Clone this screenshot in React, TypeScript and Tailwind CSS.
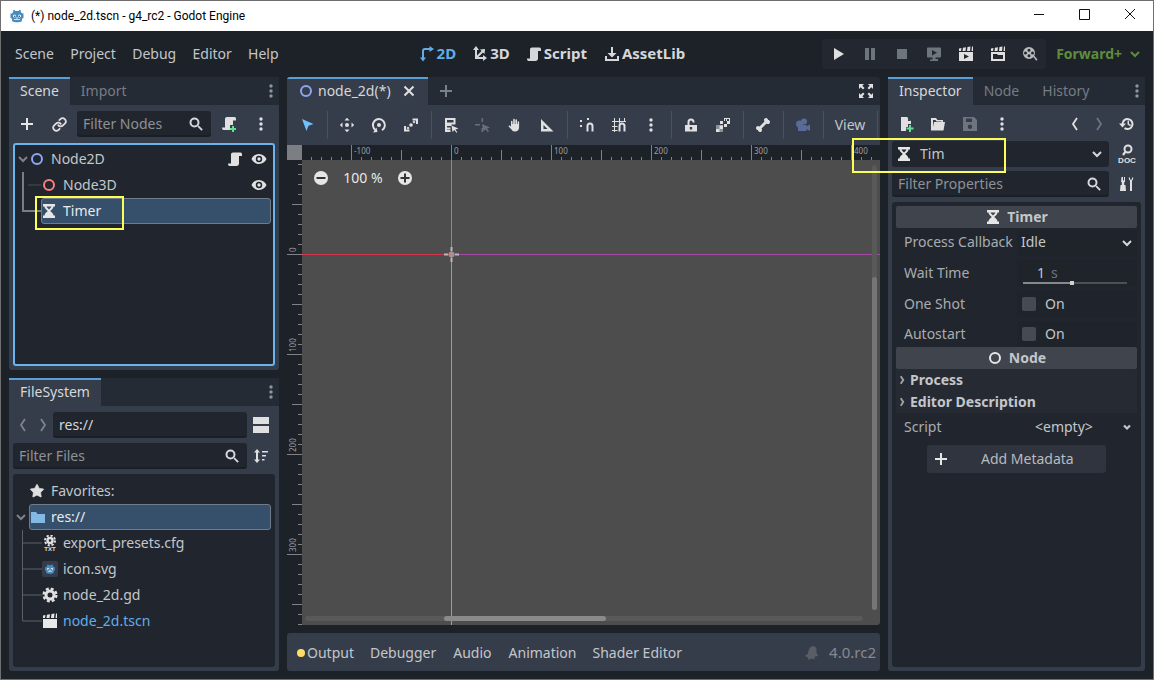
import type { ReactNode } from "react"
import { Link, Star } from "lucide-react"

const ACCENT = "border-t-2 border-[#5a9fd6] pb-[2px]"

function Ico({ children, className = "" }: { children: ReactNode; className?: string }) {
  return (
    <svg viewBox="0 0 16 16" className={`size-4 shrink-0 ${className}`} fill="currentColor">
      {children}
    </svg>
  )
}

const Line = ({ d, w = 2 }: { d: string; w?: number }) => (
  <path d={d} fill="none" stroke="currentColor" strokeWidth={w} />
)

const Plus = ({ className = "" }) => <Ico className={className}><path d="M7 2h2v5h5v2H9v5H7V9H2V7h5z" /></Ico>
const Dots = ({ className = "" }) => (
  <Ico className={className}><circle cx="8" cy="3" r="1.7" /><circle cx="8" cy="8" r="1.7" /><circle cx="8" cy="13" r="1.7" /></Ico>
)
const Search = ({ className = "" }) => (
  <Ico className={className}><circle cx="6.5" cy="6.5" r="4" fill="none" stroke="currentColor" strokeWidth="2" /><path d="M9.5 10.8l1.3-1.3 4 4-1.3 1.3z" /></Ico>
)
const Chevron = ({ className = "", w = 2 }: { className?: string; w?: number }) => <Ico className={className}><Line d="M4 6l4 4 4-4" w={w} /></Ico>
const Back = ({ className = "" }) => <Ico className={className}><Line d="M10 2L6 8l4 6" w={1.8} /></Ico>
const Fwd = ({ className = "", w = 1.8 }: { className?: string; w?: number }) => <Ico className={className}><Line d="M6 2l4 6-4 6" w={w} /></Ico>
const Hourglass = ({ className = "" }) => (
  <Ico className={className}>
    <path fillRule="evenodd" d="M2 1h12v2.500h-1.500c0 1.800-1.900 3.200-3.300 4.500 1.400 1.300 3.300 2.700 3.300 4.500H14V15H2v-2.500h1.500c0-1.800 1.900-3.200 3.300-4.500-1.400-1.300-3.300-2.700-3.300-4.500H2zM5.500 3.500c.3 1 1.500 2 2.500 3 1-1 2.200-2 2.500-3z" />
  </Ico>
)
const Ring = ({ className = "" }) => (
  <Ico className={className}><circle cx="8" cy="8" r="5" fill="none" stroke="currentColor" strokeWidth="2" /></Ico>
)
const Scroll = ({ className = "" }) => (
  <Ico className={className}><path d="M6 1.500h7.500c1 0 1.500.8 1.500 2V5h-3v7.500c0 1.500-1 2.500-2.500 2.500H2.500C1.500 15 1 14 1 12.500h3V3.500c0-1.200.8-2 2-2z" /></Ico>
)
const ScriptAdd = ({ className = "" }) => (
  <Ico className={className}>
    <path d="M6 1h7.500c1 0 1.500.8 1.500 2v1.500h-3V9H9v5H2.500C1.500 14 1 13 1 11.500h3V3c0-1.200.8-2 2-2z" />
    <path d="M11 10h2v2h2v2h-2v2h-2v-2H9v-2h2z" fill="#5fe08f" />
  </Ico>
)
const Eye = ({ className = "" }) => (
  <Ico className={className}>
    <path fillRule="evenodd" d="M8 3C4.500 3 1.800 5.300.5 8c1.300 2.700 4 5 7.500 5s6.200-2.300 7.500-5C14.200 5.300 11.500 3 8 3zm0 1.800a3.200 3.200 0 110 6.400 3.200 3.200 0 010-6.400z" />
    <circle cx="8" cy="8" r="1.700" />
  </Ico>
)
const Gear = ({ className = "" }) => (
  <Ico className={className}>
    <circle cx="8" cy="8" r="4" fill="none" stroke="currentColor" strokeWidth="3" />
    <circle cx="8" cy="8" r="6.300" fill="none" stroke="currentColor" strokeWidth="2.500" strokeDasharray="2.900 2.050" />
  </Ico>
)
const Clapper = ({ kind, className = "" }: { kind: "plain" | "play" | "custom"; className?: string }) => (
  <Ico className={className}>
    <path d="M1 2.500l2.500-.5L3 5H1zM5 1.800l3-.5L7.500 5h-3zM9.500 1.100l3-.5L12 5H9zM14 .5h1V5h-1.500z" />
    {kind === "plain" && <path d="M1 6h14v9H1z" />}
    {kind === "play" && <path fillRule="evenodd" d="M1 6h14v9H1zm5 2v5l5-2.500z" />}
    {kind === "custom" && <path fillRule="evenodd" d="M1 6h14v9H1zm2 2v5h10V9H8L7 8z" />}
  </Ico>
)

function Tab({ label, active, className = "" }: { label: string; active?: boolean; className?: string }) {
  return (
    <div className={`flex items-center h-7 px-[11px] ${active ? `bg-[#363d4a] text-[#d5d7da] ${ACCENT}` : "text-[#777c84]"} ${className}`}>
      {label}
    </div>
  )
}

function Input({ placeholder, value, width, icon }: { placeholder?: string; value?: string; width: string; icon?: boolean }) {
  return (
    <div className={`flex items-center h-[26px] ${width} bg-[#21262e] border-b-2 border-[#1a1e25] rounded-[3px] pl-[6px] pr-[7px] pt-[2px]`}>
      <span className={`flex-1 ${value ? "text-[#d5d7da]" : "text-[#8e9195]"}`}>{value ?? placeholder}</span>
      {icon && <Search className="text-[#d5d7da]" />}
    </div>
  )
}

// thin guide line of the file tree
function Branch({ last, width = 18 }: { last?: boolean; width?: number }) {
  return (
    <svg width={width} height="26" className="shrink-0 text-[#5c6067]">
      <path d={`M.5 0V${last ? 13 : 26}M.5 13H${width}`} fill="none" stroke="currentColor" />
    </svg>
  )
}

function SelectedRow({ children, className = "" }: { children: ReactNode; className?: string }) {
  return (
    <div className={`flex items-center h-[26px] flex-1 bg-[#36506b] border border-[#6f7b88] rounded-[3px] ${className}`}>
      {children}
    </div>
  )
}

function SceneDock() {
  return (
    <div className="h-[293px] flex flex-col bg-[#363d4a] rounded-[3px]">
      <div className="flex items-center bg-[#252b34] h-7 text-sm">
        <Tab label="Scene" active />
        <Tab label="Import" />
        <Dots className="ml-auto text-[#8f949a]" />
      </div>
      <div className="flex items-center h-[38px] pl-[10px]">
        <Plus className="text-[#e6e6e6]" />
        <span className="w-8 flex justify-center ml-2"><Link size={15} strokeWidth={2.8} className="text-[#e0e0e0]" /></span>
        <Input placeholder="Filter Nodes" width="w-[134px] ml-[2px]" icon />
        <span className="w-8 flex justify-center ml-[2px]"><ScriptAdd className="text-[#e0e0e0]" /></span>
        <Dots className="text-[#e0e0e0] ml-2" />
      </div>
      <div className="mx-1 flex-1 mb-1 border-2 border-[#6ab3ee] rounded-[3px] bg-[#21262e] text-sm pt-px text-[#c3c6ca]">
        <div className="flex items-center h-[26px]">
          <Chevron className="text-[#7e8287] -mr-[2px]" />
          <Ring className="text-[#8da5f3]" />
          <span className="ml-[6px] flex-1">Node2D</span>
          <Scroll className="text-[#e0e0e0] mr-2" />
          <Eye className="text-[#e0e0e0] mr-[6px]" />
        </div>
        <div className="flex items-center h-[26px] pl-[7px]">
          <svg width="19" height="26" className="shrink-0">
            <path d="M6 13H19" stroke="#4a4e55" />
            <path d="M1 0V26" stroke="#7a7d82" strokeWidth="2" />
          </svg>
          <Ring className="text-[#fc7f7f]" />
          <span className="ml-[6px] flex-1">Node3D</span>
          <Eye className="text-[#e0e0e0] mr-[6px]" />
        </div>
        <div className="flex items-center h-[26px] pl-[7px]">
          <svg width="19" height="26" className="shrink-0">
            <path d="M1 0V13H19" fill="none" stroke="#7a7d82" strokeWidth="2" />
          </svg>
          <SelectedRow className="mr-[2px] text-[#e8eaec]">
            <Hourglass className="ml-[-1px] text-[#e6e6e6]" />
            <span className="ml-[6px]">Timer</span>
          </SelectedRow>
        </div>
      </div>
    </div>
  )
}

const GodotIcon = ({ className = "" }) => (
  <Ico className={className}>
    <path d="M4 2.500l1.500-.8.800 1.300h3.400l.8-1.300 1.500.8-.3 1.500 1.800 1.500 1-.3v4.800l-1.300.5-.5 3-3.200.8H6.500l-3.200-.8-.5-3-1.300-.5V5.500l1 .3L4.300 4z" fill="#478cbf" />
    <circle cx="5.500" cy="8" r="1.500" fill="#fff" />
    <circle cx="10.500" cy="8" r="1.500" fill="#fff" />
    <circle cx="5.700" cy="8.200" r=".7" fill="#333" />
    <circle cx="10.300" cy="8.200" r=".7" fill="#333" />
    <path d="M7.200 9.500h1.600v1H7.200zM5 11.300h6v.8H5z" fill="#fff" />
  </Ico>
)

function FileRow({ icon, label, blue, last }: { icon: ReactNode; label: string; blue?: boolean; last?: boolean }) {
  return (
    <div className="flex items-center h-[26px] pl-[9px]">
      <Branch last={last} width={20} />
      {icon}
      <span className={`ml-[5px] ${blue ? "text-[#62ade8]" : ""}`}>{label}</span>
    </div>
  )
}

function FileDock() {
  return (
    <div className="h-[293px] flex flex-col bg-[#363d4a] rounded-[3px]">
      <div className="flex items-center bg-[#252b34] h-7 text-sm">
        <Tab label="FileSystem" active />
        <Dots className="ml-auto text-[#8f949a]" />
      </div>
      <div className="flex items-center h-[26px] mt-[6px] pl-[6px]">
        <Back className="text-[#7e848c]" />
        <Fwd className="text-[#7e848c] ml-1" />
        <Input value="res://" width="w-[194px] ml-[2px]" />
        <svg width="16" height="20" className="ml-[6px] text-[#e0e0e0]" fill="currentColor">
          <path d="M0 2h16v7H0zM0 11h16v7H0z" />
        </svg>
      </div>
      <div className="flex items-center h-[26px] mt-[5px] pl-1">
        <Input placeholder="Filter Files" width="w-[234px]" icon />
        <Ico className="ml-[6px] text-[#e0e0e0]">
          <path d="M4 1l3 3.500H5v7h2L4 15l-3-3.500h2v-7H1zM9 3h6v1.500H9zM9 7h4v1.500H9zM9 11h2.500v1.500H9z" />
        </Ico>
      </div>
      <div className="mx-1 mt-[5px] mb-1 flex-1 rounded-[3px] bg-[#21262e] text-sm text-[#c3c6ca] pt-[4px] pr-1">
        <div className="flex items-center h-[26px] pl-4">
          <Star size={16} className="fill-[#e0e0e0] text-[#e0e0e0]" strokeWidth={1} />
          <span className="ml-[6px]">Favorites:</span>
        </div>
        <div className="flex items-center h-[26px]">
          <Chevron className="text-[#7e8287]" />
          <SelectedRow className="text-[#e8eaec]">
            <Ico className="text-[#83b8e4]"><path d="M1 3h5l1.500 2H15v9H1z" /></Ico>
            <span className="ml-[5px]">res://</span>
          </SelectedRow>
        </div>
        <FileRow label="export_presets.cfg" icon={
          <Ico className="text-[#e0e0e0]">
            <circle cx="8" cy="5.500" r="2.500" fill="none" stroke="currentColor" strokeWidth="2.500" />
            <circle cx="8" cy="5.500" r="5" fill="none" stroke="currentColor" strokeWidth="2" strokeDasharray="2.200 1.700" />
            <text x="8" y="15.800" textAnchor="middle" fontSize="6" fontWeight="700" fontFamily="Liberation Sans, sans-serif" fill="currentColor">TXT</text>
          </Ico>
        } />
        <FileRow label="icon.svg" icon={
          <span className="size-4 shrink-0 bg-[#363d4a] rounded-[2px] flex items-center justify-center"><GodotIcon className="!size-[12px]" /></span>
        } />
        <FileRow label="node_2d.gd" icon={<Gear className="text-[#e0e0e0]" />} />
        <FileRow label="node_2d.tscn" blue last icon={<Clapper kind="plain" className="text-[#e8e8e8]" />} />
      </div>
    </div>
  )
}

const Sep = () => (
  <span className="w-2 h-7 flex justify-center shrink-0"><span className="w-px h-full bg-[#4b515c]" /></span>
)
const Btn = ({ children }: { children: ReactNode }) => (
  <span className="w-8 flex justify-center shrink-0">{children}</span>
)

const Magnet = () => <path d="M7.500 14.500V9a3.500 3.500 0 0 1 7 0v5.500h-2V9a1.500 1.500 0 0 0-3 0v5.500z" />

function CanvasToolbar() {
  const c = "text-[#e0e0e0]"
  const dim = "text-[#6b7078]"
  return (
    <div className="flex items-center h-10 bg-[#363d4a] pl-1">
      <Btn><Ico className="text-[#70bfff]"><path d="M3 2l11.500 5-5 1.800L7.500 14z" /></Ico></Btn>
      <Sep />
      <Btn><Ico className={c}><circle cx="8" cy="8" r="2" /><path d="M8 .8L10.500 3.500h-5zM8 15.200l2.500-2.700h-5zM.8 8l2.700-2.500v5zM15.200 8l-2.700-2.500v5z" /></Ico></Btn>
      <Btn><Ico className={c}><path d="M4.500 13A6 6 0 1 1 11 13.200" fill="none" stroke="currentColor" strokeWidth="2" /><circle cx="8" cy="8" r="2" /><path d="M2 15.500l4.500-.5-1-4.500z" /></Ico></Btn>
      <Btn><Ico className={c}><circle cx="8" cy="8" r="1.800" /><path d="M9.500 1.500H15V7h-2V3.500H9.500zM1 9h2v3.500h3.500v2H1z" /><path d="M11 3.500l1.500 1.500-1.500 1.500L9.500 5zM5 9.500L6.500 11 5 12.500 3.500 11z" /></Ico></Btn>
      <Sep />
      <Btn><Ico className={c}><path fillRule="evenodd" d="M2 1h10.500v6.500H8.500V9H4v1.500h3.500v2H4V13h3.500v2H2zM4 3v2.500h6.500V3z" /><path d="M8.500 8.500l7 3-3 .9 1.800 2.800-1 .6-1.800-2.800-2 2z" /></Ico></Btn>
      <Btn><Ico className={dim}><path d="M0 7h5v1.500H0zM6.500 1H8v4H6.500zM6.500 11H8v4H6.500z" /><path d="M7 7l8 3.500-3 1 2 3-1.200.7-2-3-2.300 2z" /></Ico></Btn>
      <Btn><Ico className={c}><path d="M4 4.500c0-1 1.500-1 1.500 0V7h.7V2.500c0-1 1.600-1 1.600 0V7h.6V3c0-1 1.600-1 1.600 0v4h.6V5c0-1 1.500-1 1.500 0v5.500c0 2.500-2 4-4 4H7.500c-1.500 0-2.300-1-3-2L1.800 9.800c-.7-1 .5-1.800 1.300-1L4 9.800z" /></Ico></Btn>
      <Btn><Ico className={c}><path fillRule="evenodd" d="M2 2l12.500 12.500H2zM4.500 8v4h4z" /></Ico></Btn>
      <Sep />
      <Btn><Ico className={c}><path d="M1 3h2v2H1zM1 8h2v2H1zM8 1h2v2H8z" /><Magnet /></Ico></Btn>
      <Btn><Ico className={c}><path d="M3.500 1v14M8.500 1v5.500M13.500 1v4M1 4.500h14M1 9.500h5.500M1 13.500h5.500" fill="none" stroke="currentColor" /><Magnet /></Ico></Btn>
      <Btn><Dots className={c} /></Btn>
      <Sep />
      <Btn><Ico className={c}><path fillRule="evenodd" d="M2 8h12v6.500H2zM6.800 10v2.500h2.400V10z" /><path d="M4.500 8V5a3.500 3.500 0 0 1 7 0v.5h-2V5a1.500 1.500 0 0 0-3 0v3z" /></Ico></Btn>
      <Btn><Ico className={c}><path d="M9 1h3v1H9zM11 1h1v3h-1zM12 4h3v3h-3zM9 7h3v3H9zM9 1h1v3H9zM12 1h3v3h-1V2h-2zM5 4h3v3H5z" /><path d="M1 8h7v7H1z" opacity=".5" /><path d="M1 12h3.500v3H1zM4.500 8.500H8V12H4.500z" /></Ico></Btn>
      <Sep />
      <Btn><Ico className={c}><path d="M11 1c1.500 0 2 1.200 2 2 .9 0 2 .6 2 2 0 2-2.300 2.600-3.500 1.500L6.500 11.500c1 1.200.5 3.500-1.500 3.500-1.400 0-2-1.100-2-2-.9 0-2-.6-2-2 0-2 2.300-2.600 3.500-1.500L9.500 4.500C8.500 3.300 9 1 11 1z" /></Ico></Btn>
      <Sep />
      <Btn><Ico className="text-[#5a6a9a]"><circle cx="4.500" cy="7" r="3.500" /><circle cx="9" cy="4.500" r="3" /><path d="M3 8h8.500v6H3zM11.500 9.500L15 7.500v6.500l-3.500-2z" /></Ico></Btn>
      <Sep />
      <span className="w-[46px] text-center text-sm text-[#c3c6ca] shrink-0">View</span>
      <Sep />
    </div>
  )
}

function TopRuler() {
  const ticks = Array.from({ length: 58 }, (_, i) => i)
  const origin = 149.5 // x of world 0 inside the strip
  return (
    <svg width="578" height="15" className="block text-[#7f8388]" stroke="currentColor">
      {ticks.map((i) => {
        const w = -140 + i * 10
        const x = origin + w
        const y = w % 100 === 0 ? 0 : w % 50 === 0 ? 5 : 12
        return <path key={i} d={`M${x} ${y}V15`} />
      })}
      {[-100, 0, 100, 200, 300, 400].map((w) => (
        <text key={w} x={origin + w + 2.500} y="9" fontSize="8" fill="#9a9da2" stroke="none" fontFamily="Noto Sans, sans-serif">{w}</text>
      ))}
    </svg>
  )
}

function LeftRuler() {
  const origin = 94.5 // y of world 0 inside the strip
  const ticks = Array.from({ length: 47 }, (_, i) => -90 + i * 10)
  return (
    <svg width="15" height="465" className="block shrink-0 text-[#7f8388]" stroke="currentColor">
      {ticks.map((w) => {
        const y = origin + w
        const x = w % 100 === 0 ? 0 : w % 50 === 0 ? 5 : 11
        return <path key={w} d={`M${x} ${y}H15`} />
      })}
      {[0, 100, 200, 300].map((w) => (
        <text key={w} transform={`translate(9 ${origin + w - 2.500}) rotate(-90)`} fontSize="8" fill="#9a9da2" stroke="none" fontFamily="Noto Sans, sans-serif">{w}</text>
      ))}
    </svg>
  )
}

function ZoomBtn({ plus }: { plus?: boolean }) {
  return (
    <svg viewBox="0 0 16 16" className="size-4 shrink-0">
      <circle cx="8" cy="8" r="7" fill="#e6e6e6" />
      <path d={plus ? "M3.500 8h9M8 3.500v9" : "M3.500 8h9"} stroke="#333" strokeWidth="2" />
    </svg>
  )
}

function Viewport() {
  return (
    <div className="relative flex-1 bg-[#4d4d4d] overflow-hidden">
      <div className="absolute left-[11px] top-2 flex items-center text-sm text-[#e8e8e8]">
        <ZoomBtn />
        <span className="w-[68px] text-center">100 %</span>
        <ZoomBtn plus />
      </div>
      <div className="absolute left-0 top-[94px] h-px w-[149px] bg-[#d1354c]" />
      <div className="absolute left-[149px] top-[94px] h-px right-0 bg-[#a449a6]" />
      <div className="absolute left-[149px] top-0 w-px h-[94px] bg-[#7fa51f]" />
      <div className="absolute left-[149px] top-[95px] w-px bottom-0 bg-[#8fa391]" />
      <svg width="15" height="15" className="absolute left-[142px] top-[87px]">
        <path d="M7.500 0v4M7.500 11v4M0 7.500h4M11 7.500h4" stroke="#b9b9b9" strokeWidth="2" />
        <circle cx="7.500" cy="7.500" r="3" fill="#a89090" />
      </svg>
      <div className="absolute left-[570px] top-[5px] w-[5px] h-[445px] rounded-full bg-[#595959]">
        <div className="mt-[112px] h-[333px] rounded-full bg-[#767676]" />
      </div>
      <div className="absolute left-[3px] top-[456px] h-[5px] w-[558px] rounded-full bg-[#595959]">
        <div className="ml-[139px] h-full w-[162px] rounded-full bg-[#8a8a8a]" />
      </div>
    </div>
  )
}

function CenterColumn() {
  return (
    <div className="w-[593px] flex flex-col gap-2">
      <div className="flex-1 flex flex-col rounded-[3px] overflow-hidden">
        <div className="flex items-center h-7 bg-[#252b34] text-sm">
          <div className={`flex items-center h-7 w-[141px] bg-[#363d4a] text-[#d5d7da] pl-[11px] ${ACCENT}`}>
            <Ring className="text-[#8da5f3]" />
            <span className="ml-1">node_2d(*)</span>
            <Ico className="ml-[10px] text-[#e0e0e0]"><Line d="M3.500 3.500l9 9M12.500 3.500l-9 9" /></Ico>
          </div>
          <Plus className="ml-[10px] text-[#7b8087]" />
          <Ico className="ml-auto mr-[6px] text-[#e0e0e0]">
            <path d="M1 1h5L4.300 2.700 6.500 5 5 6.500 2.700 4.300 1 6zM15 1v5l-1.700-1.700L11 6.500 9.500 5l2.200-2.300L10 1zM1 15v-5l1.700 1.700L5 9.500 6.500 11l-2.200 2.300L6 15zM15 15h-5l1.700-1.700L9.500 11l1.500-1.500 2.300 2.200L15 10z" />
          </Ico>
        </div>
        <CanvasToolbar />
        <div className="flex items-start bg-[#1d2229]">
          <div className="w-[15px] h-[15px] bg-[#7b7e82]" />
          <TopRuler />
        </div>
        <div className="flex-1 flex bg-[#1d2229] min-h-0">
          <LeftRuler />
          <Viewport />
        </div>
      </div>
      <div className="h-[38px] flex items-center bg-[#363d4a] rounded-[3px] text-sm text-[#c3c6ca] pl-[10px] pr-1 pt-[1px]">
        <span className="size-2 rounded-full bg-[#ffdd65]" />
        <span className="ml-[2px]">Output</span>
        <span className="ml-4">Debugger</span>
        <span className="ml-[17px]">Audio</span>
        <span className="ml-[17px]">Animation</span>
        <span className="ml-4">Shader Editor</span>
        <Ico className="ml-auto text-[#585d66]"><path d="M9 1c2.500 0 3.500 2 3.500 4v3l2 3-3.500.5-.5 3-3-1-3 1.500-.5-2.500-3-1.500 3-2.500c.5-3 1.500-7.500 5.500-7.500z" /></Ico>
        <span className="ml-[9px] text-[15px] text-[#868a90]">4.0.rc2</span>
      </div>
    </div>
  )
}

function SectionHead({ icon, label }: { icon: ReactNode; label: string }) {
  return (
    <div className="flex items-center justify-center h-[22px] bg-[#3f444d] rounded-[2px] font-bold text-[#c3c6ca]">
      {icon}
      <span className="ml-[6px]">{label}</span>
    </div>
  )
}

function PropRow({ label, height, lift, children }: { label: string; height: string; lift?: boolean; children: ReactNode }) {
  return (
    <div className={`flex ${height}`}>
      <span className={`w-[121px] pl-2 flex items-center text-[#a9acb0] whitespace-nowrap ${lift ? "pb-[2px]" : ""}`}>{label}</span>
      <div className="flex-1 bg-[#1f242b] rounded-[3px] flex items-center">{children}</div>
    </div>
  )
}

function Check() {
  return (
    <>
      <span className="ml-[5px] size-[14px] rounded-[2px] bg-[#474a50]" />
      <span className="ml-[9px] text-[#c3c6ca]">On</span>
    </>
  )
}

function Inspector() {
  return (
    <div className="w-[257px] flex flex-col bg-[#363d4a] rounded-[3px] text-sm">
      <div className="flex items-center bg-[#252b34] h-7">
        <Tab label="Inspector" active />
        <Tab label="Node" />
        <Tab label="History" className="ml-[1px]" />
        <Dots className="ml-auto text-[#8f949a]" />
      </div>
      <div className="flex items-center h-9 pl-[2px] pt-[2px] text-[#e0e0e0]">
        <Btn><Ico><path d="M3 1h6l4 4v3h-3v3H8v4H3z" /><path d="M10 1.500L13 5h-3z" fill="#363d4a" /><path d="M11 9h2v2.500h2.500v2H13V16h-2v-2.500H8.500v-2H11z" fill="#5fe08f" /></Ico></Btn>
        <Btn><Ico><path fillRule="evenodd" d="M1 2h5l1.500 2H13v2h2l-1.500 8.500H1zM3 5v6l1-5h7.500V5.500H6.500L5.500 4H3z" /></Ico></Btn>
        <Btn><Ico className="text-[#6f757e]"><path fillRule="evenodd" d="M1 1h11l3 3v11H1zM4 2.500V6h6V2.500zM8 8.500a2.200 2.200 0 100 4.400 2.200 2.200 0 000-4.400z" /></Ico></Btn>
        <Btn><Dots /></Btn>
        <Back className="ml-[49px]" />
        <Fwd className="ml-2 text-[#6f757e]" />
        <Ico className="ml-[12px]"><path d="M3.500 8a5 5 0 1 1 2 4" fill="none" stroke="currentColor" strokeWidth="2" /><path d="M0 7.500h7L3.500 11.500z" /><path d="M8.500 4.500H10v3.300l2 1.200-.7 1.200-2.800-1.700z" /></Ico>
      </div>
      <div className="flex items-center h-[26px] pl-1">
        <div className="flex items-center w-[217px] h-full bg-[#21262e] rounded-[3px] px-1">
          <Hourglass className="text-[#e6e6e6]" />
          <span className="ml-2 flex-1 text-[#c3c6ca]">Tim</span>
          <Chevron className="text-[#d5d7da]" />
        </div>
        <svg viewBox="0 0 20 20" className="ml-2 size-5 text-[#e0e0e0]" fill="currentColor">
          <circle cx="11" cy="5" r="3.500" fill="none" stroke="currentColor" strokeWidth="2" />
          <path d="M8.300 7.800L6 11" stroke="currentColor" strokeWidth="2.200" />
          <text x="10" y="18.500" textAnchor="middle" fontSize="8" fontWeight="700" fontFamily="Liberation Sans, sans-serif" fill="currentColor">DOC</text>
        </svg>
      </div>
      <div className="flex items-center h-[26px] pl-1 mt-1">
        <Input placeholder="Filter Properties" width="w-[217px]" icon />
        <Ico className="ml-[10px] text-[#e0e0e0]">
          <path d="M2.500 1H4v3.500h1V1h1v5H5.200v3H6.500L7 15H1l.5-6h1.300V6H2zM10 1c-.5 1 0 3 1 3.500V15h2V4.500c1-.5 1.500-2.500 1-3.500l-1 1v1.500h-2V2z" />
        </Ico>
      </div>
      <div className="mx-1 mt-[5px] mb-1 flex-1 bg-[#21262e] rounded-[3px] px-1 pt-1 text-[#c3c6ca]">
        <SectionHead label="Timer" icon={<Hourglass className="text-[#e6e6e6]" />} />
        <div className="flex flex-col gap-1 mt-[2px]">
          <PropRow label="Process Callback" height="h-[26px]" lift>
            <span className="ml-1 flex-1 pb-[2px]">Idle</span>
            <Chevron className="mr-[2px] text-[#d5d7da]" />
          </PropRow>
          <PropRow label="Wait Time" height="h-[27px]" lift>
            <div className="w-full pl-[6px] pr-[10px] pt-[2px]">
              <div className="flex pl-[14px] leading-[16px]">
                <span>1</span><span className="ml-[6px] text-[#6f7379]">s</span>
              </div>
              <div className="relative h-[2px] mt-[1px] bg-[#4c4f55]">
                <div className="h-full w-[49px] bg-[#85888c]" />
                <div className="absolute left-[47px] -top-[1px] size-1 bg-[#d0d0d0]" />
              </div>
            </div>
          </PropRow>
          <PropRow label="One Shot" height="h-[26px]"><Check /></PropRow>
          <PropRow label="Autostart" height="h-[26px]"><Check /></PropRow>
        </div>
        <SectionHead label="Node" icon={<Ring className="text-[#e6e6e6]" />} />
        <div className="bg-[#262b33] font-bold">
          <div className="flex items-center h-[22px]">
            <Fwd w={3} className="!size-[10px] ml-[1px] text-[#a0a3a8]" />
            <span className="ml-[3px]">Process</span>
          </div>
          <div className="flex items-center h-[22px]">
            <Fwd w={3} className="!size-[10px] ml-[1px] text-[#a0a3a8]" />
            <span className="ml-[3px]">Editor Description</span>
          </div>
        </div>
        <div className="flex items-center h-[28px] pl-2 text-[#a9acb0]">
          <span className="w-[131px]">Script</span>
          <span className="w-[66px] text-[#c3c6ca]">{"<empty>"}</span>
          <Chevron w={3} className="!size-[12px] ml-[20px] text-[#c3c6ca]" />
        </div>
        <div className="flex items-center h-7 w-[179px] ml-[31px] mt-1 bg-[#2f343e] rounded-[3px] pl-[6px] text-[#b8bbbf]">
          <Plus className="text-[#e6e6e6]" />
          <span className="ml-[32px]">Add Metadata</span>
        </div>
      </div>
    </div>
  )
}

export default function App() {
  return (
    <div className="relative w-[1154px] h-[680px] overflow-hidden border border-[#6f6f6f] bg-[#1d2229] font-['Noto_Sans',sans-serif] flex flex-col">
      <div className="flex items-center h-[30px] bg-white text-black text-xs font-['Roboto',sans-serif] shrink-0">
        <GodotIcon className="ml-[8px] mt-[-1px]" />
        <span className="ml-[6px] mt-[-1px]">(*) node_2d.tscn - g4_rc2 - Godot Engine</span>
        <svg width="115" height="16" className="ml-auto mr-1" fill="none" stroke="#111">
          <path d="M0 6.500H10M45.500 1.500h10v10h-10zM91 1l10 10M101 1L91 11" />
        </svg>
      </div>
      <div className="relative flex items-center h-[46px] shrink-0 text-sm text-[#c3c6ca] pl-[14px]">
        <div className="flex gap-[16.3px]">
          <span>Scene</span>
          <span>Project</span>
          <span>Debug</span>
          <span>Editor</span>
          <span>Help</span>
        </div>
        <div className="flex items-center ml-[140px] font-bold text-[15px]">
          <span className="flex items-center text-[#62ade8]">
            <Ico><Line d="M4 13V5c0-1 1-2 2-2h5" /><path d="M10.500 0L15 3l-4.500 3zM1 11.500h6L4 15.500z" /></Ico>
            <span className="ml-[2px]">2D</span>
          </span>
          <span className="flex items-center ml-4 text-[#d5d7da]">
            <Ico><Line d="M4 3v9h9M4 12l8-8" /><path d="M4 0l3 4H1zM15 12l-4 3V9zM13 3l-.5 5-4.500-4.500z" /></Ico>
            <span className="ml-[2px]">3D</span>
          </span>
          <span className="flex items-center ml-4 text-[#d5d7da]">
            <Scroll />
            <span className="ml-[2px]">Script</span>
          </span>
          <span className="flex items-center ml-[17px] text-[#d5d7da]">
            <Ico><path d="M7 1h2v6h3.500L8 11.500 3.500 7H7zM1 10h2v3h10v-3h2v5H1z" /></Ico>
            <span className="ml-[2px]">AssetLib</span>
          </span>
        </div>
        <div className="flex items-center h-[30px] w-[224px] ml-[137px] bg-[#232830] rounded-[3px] text-[#e0e0e0]">
          <Btn><Ico><path d="M4 2v12l10-6z" /></Ico></Btn>
          <Btn><Ico className="text-[#6f757e]"><path d="M3 2h4v12H3zM9 2h4v12H9z" /></Ico></Btn>
          <Btn><Ico className="text-[#6f757e]"><path d="M3 3h10v10H3z" /></Ico></Btn>
          <Btn><Ico className="text-[#6f757e]"><path fillRule="evenodd" d="M2 1.500h12c.6 0 1 .4 1 1v8c0 .6-.4 1-1 1H9.500v1.500H12V15H4v-1.500h2.500V11.500H2c-.6 0-1-.4-1-1v-8c0-.6.4-1 1-1zM6 4v5.500l5-2.800z" /></Ico></Btn>
          <Btn><Clapper kind="play" /></Btn>
          <Btn><Clapper kind="custom" /></Btn>
          <Btn><Ico className="text-[#b9bbbe]"><path fillRule="evenodd" d="M7 1a6 6 0 100 12 6 6 0 000-12zm0 1.800a1.500 1.500 0 110 3 1.500 1.500 0 010-3zM3.500 5.500a1.500 1.500 0 110 3 1.500 1.500 0 010-3zm7 0a1.500 1.500 0 110 3 1.500 1.500 0 010-3zM7 8.200a1.500 1.500 0 110 3 1.500 1.500 0 010-3z" /><path d="M11 10.500l1-1 3.500 4-1.200 1.300z" /></Ico></Btn>
        </div>
        <span className="ml-[10px] font-bold text-[#5d8c3f]">Forward+</span>
        <Chevron className="ml-[5px] text-[#5d8c3f]" />
      </div>
      <div className="flex-1 flex gap-2 px-2 pb-2 min-h-0 text-sm">
        <div className="w-[270px] flex flex-col gap-2">
          <SceneDock />
          <FileDock />
        </div>
        <CenterColumn />
        <Inspector />
      </div>
      <div className="absolute left-[34px] top-[195px] w-[89px] h-[34px] border-2 border-[#fdfd5a]" />
      <div className="absolute left-[851px] top-[137px] w-[154px] h-[35px] border-2 border-[#fdfd5a]" />
    </div>
  )
}
